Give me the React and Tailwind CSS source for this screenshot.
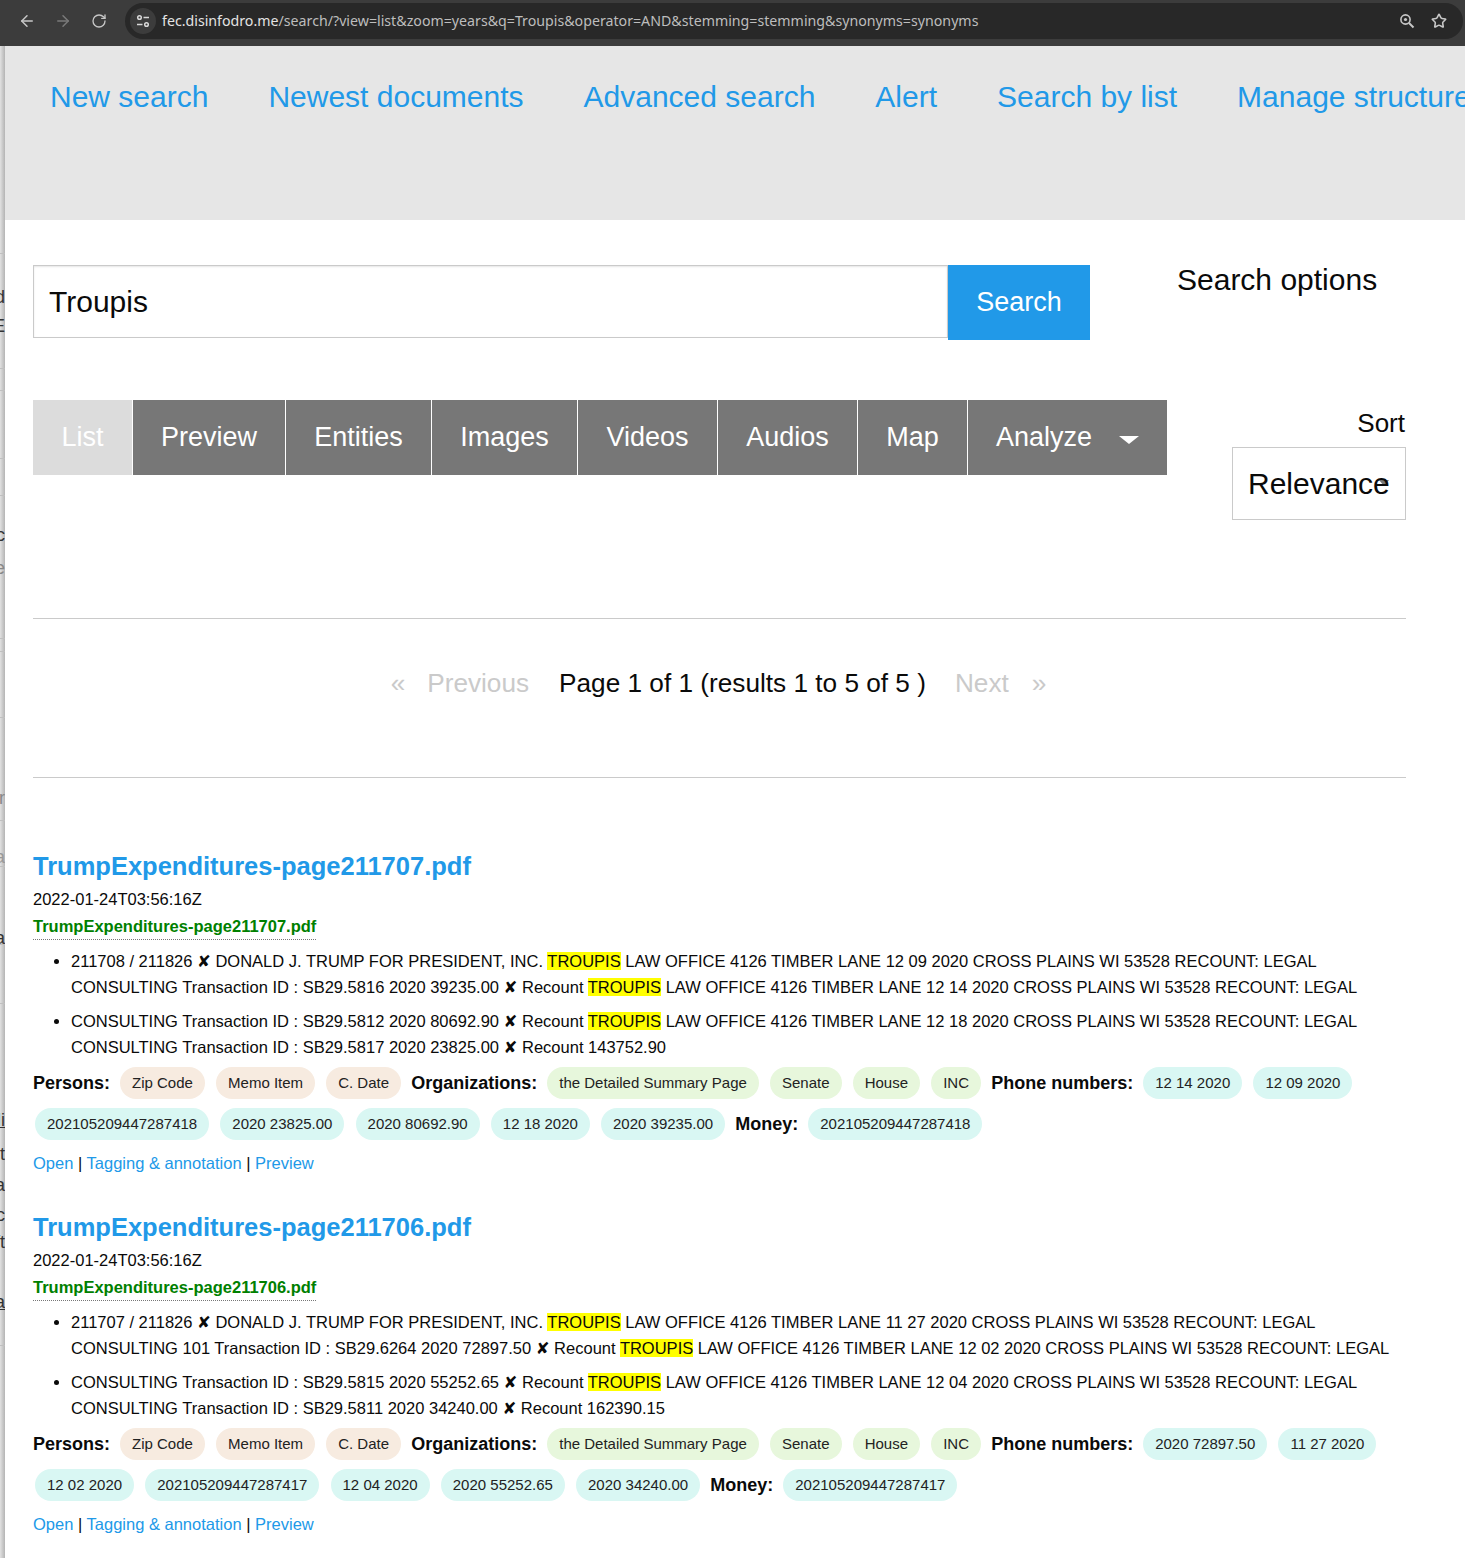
import React from "react";
import { ArrowLeft, ArrowRight, RotateCw, Star } from "lucide-react";

const navLinks = ["New search", "Newest documents", "Advanced search", "Alert", "Search by list", "Manage structure"];
const tabs = [
  { name: "List", w: "w-[99px]", active: true },
  { name: "Preview", w: "w-[152px]" },
  { name: "Entities", w: "w-[145px]" },
  { name: "Images", w: "w-[145px]" },
  { name: "Videos", w: "w-[139px]" },
  { name: "Audios", w: "w-[139px]" },
  { name: "Map", w: "w-[109px]" },
];

// bits of the window behind, showing at the left edge
const behind = [
  { t: "d", top: 286, c: "text-[#333]" },
  { t: "E", top: 315, c: "text-[#333]" },
  { t: "c", top: 524, c: "text-[#333]" },
  { t: "e", top: 557, c: "text-[#888]" },
  { t: "r", top: 787, c: "text-[#888]" },
  { t: "a", top: 846, c: "text-[#999]" },
  { t: "a", top: 927, c: "text-[#333]" },
  { t: "li", top: 1109, c: "text-[#333] underline" },
  { t: "ot", top: 1143, c: "text-[#333]" },
  { t: "ia", top: 1174, c: "text-[#333]" },
  { t: "ic", top: 1204, c: "text-[#333]" },
  { t: "ft", top: 1231, c: "text-[#333]" },
  { t: "a", top: 1291, c: "text-[#333] underline" },
];
const behindLines = [253, 368, 458, 390, 495, 638, 651, 717, 820, 866, 944, 1003, 1190, 1345];

const results = [
  {
    file: "TrumpExpenditures-page211707.pdf",
    snippets: [
      [
        ["211708 / 211826 ✘ DONALD J. TRUMP FOR PRESIDENT, INC. ", " LAW OFFICE 4126 TIMBER LANE 12 09 2020 CROSS PLAINS WI 53528 RECOUNT: LEGAL"],
        ["CONSULTING Transaction ID : SB29.5816 2020 39235.00 ✘ Recount ", " LAW OFFICE 4126 TIMBER LANE 12 14 2020 CROSS PLAINS WI 53528 RECOUNT: LEGAL"],
      ],
      [
        ["CONSULTING Transaction ID : SB29.5812 2020 80692.90 ✘ Recount ", " LAW OFFICE 4126 TIMBER LANE 12 18 2020 CROSS PLAINS WI 53528 RECOUNT: LEGAL"],
        ["CONSULTING Transaction ID : SB29.5817 2020 23825.00 ✘ Recount 143752.90"],
      ],
    ],
    phones: ["12 14 2020", "12 09 2020", "202105209447287418", "2020 23825.00", "2020 80692.90", "12 18 2020", "2020 39235.00"],
    money: "202105209447287418",
  },
  {
    file: "TrumpExpenditures-page211706.pdf",
    snippets: [
      [
        ["211707 / 211826 ✘ DONALD J. TRUMP FOR PRESIDENT, INC. ", " LAW OFFICE 4126 TIMBER LANE 11 27 2020 CROSS PLAINS WI 53528 RECOUNT: LEGAL"],
        ["CONSULTING 101 Transaction ID : SB29.6264 2020 72897.50 ✘ Recount ", " LAW OFFICE 4126 TIMBER LANE 12 02 2020 CROSS PLAINS WI 53528 RECOUNT: LEGAL"],
      ],
      [
        ["CONSULTING Transaction ID : SB29.5815 2020 55252.65 ✘ Recount ", " LAW OFFICE 4126 TIMBER LANE 12 04 2020 CROSS PLAINS WI 53528 RECOUNT: LEGAL"],
        ["CONSULTING Transaction ID : SB29.5811 2020 34240.00 ✘ Recount 162390.15"],
      ],
    ],
    phones: ["2020 72897.50", "11 27 2020", "12 02 2020", "202105209447287417", "12 04 2020", "2020 55252.65", "2020 34240.00"],
    money: "202105209447287417",
  },
];

const Chip = ({ color, children }) => (
  <span className={`ml-[2px] mr-[9.15px] flex h-[32px] items-center rounded-full px-[12px] text-[15px] text-[#222] ${color}`}>
    {children}
  </span>
);

const Label = ({ first, children }) => (
  <span className={`mr-[8px] text-[18px] font-bold text-[#0a0a0a] ${first ? "" : "ml-[1px]"}`}>{children}</span>
);

const Line = ({ parts }) => (
  <div className="whitespace-nowrap">
    {parts[0]}
    {parts.length > 1 && <mark className="bg-[#ffff00] text-[#0a0a0a]">TROUPIS</mark>}
    {parts[1]}
  </div>
);

const Result = ({ r }) => (
  <div className="h-[361px]">
    <a className="block h-[38px] text-[25.5px] font-bold leading-[38px] text-[#2199e8]">{r.file}</a>
    <div className="mt-[2px] text-[16.5px] leading-[24px] text-[#0a0a0a]">2022-01-24T03:56:16Z</div>
    <div className="mt-[3px]">
      <a className="inline-block border-b border-dotted border-[#777] text-[16.5px] font-bold leading-[25px] text-[#008000]">{r.file}</a>
    </div>
    <ul className="mb-[7px] mt-[8px] list-disc pl-[38px] text-[16.5px] leading-[26px] text-[#0a0a0a]">
      {r.snippets.map((item, i) => (
        <li key={i} className="mt-[8px] first:mt-0">
          {item.map((parts, j) => (
            <Line key={j} parts={parts} />
          ))}
        </li>
      ))}
    </ul>
    <div className="flex flex-wrap items-center gap-y-[9px]">
      <Label first>Persons:</Label>
      {["Zip Code", "Memo Item", "C. Date"].map((c) => (
        <Chip key={c} color="bg-[#f7ebe0]">{c}</Chip>
      ))}
      <Label>Organizations:</Label>
      {["the Detailed Summary Page", "Senate", "House", "INC"].map((c) => (
        <Chip key={c} color="bg-[#e7f7dc]">{c}</Chip>
      ))}
      <Label>Phone numbers:</Label>
      {r.phones.map((c) => (
        <Chip key={c} color="bg-[#d9f7f3]">{c}</Chip>
      ))}
      <Label>Money:</Label>
      <Chip color="bg-[#d9f7f3]">{r.money}</Chip>
    </div>
    <div className="mt-[10px] text-[16.5px] leading-[26px] text-[#0a0a0a]">
      <a className="text-[#2199e8]">Open</a> | <a className="text-[#2199e8]">Tagging &amp; annotation</a> |{" "}
      <a className="text-[#2199e8]">Preview</a>
    </div>
  </div>
);

export default function App() {
  return (
    <div className="relative h-[1558px] w-[1465px] overflow-hidden bg-white font-['Liberation_Sans','DejaVu_Sans',sans-serif]">
      {/* browser toolbar */}
      <div className="flex h-[46px] items-center bg-[#3c3c3c] pb-[4px] pl-[18px] pr-[2px] font-['Noto_Sans',sans-serif]">
        <ArrowLeft size={18} className="text-[#c7c7c7]" />
        <ArrowRight size={18} className="ml-[18px] text-[#7a7a7a]" />
        <RotateCw size={16} className="ml-[19px] text-[#c7c7c7]" />
        <div className="ml-[18px] flex h-[36px] flex-1 items-center rounded-full bg-[#282828] pl-[5px] pr-[16px]">
          <div className="flex h-[26px] w-[26px] items-center justify-center rounded-full bg-[#3c3c3c]">
            <svg width="16" height="16" viewBox="0 0 16 16" fill="none" stroke="#d8d8d8" strokeWidth="1.5">
              <circle cx="4.5" cy="4.5" r="1.8" />
              <path d="M8.5 4.5H14" />
              <path d="M2 11.5H7.5" />
              <circle cx="11.5" cy="11.5" r="1.8" />
            </svg>
          </div>
          <div className="ml-[6px] flex-1 whitespace-nowrap text-[14.2px] text-[#bdbdbd]">
            <span className="text-[#e3e3e3]">fec.disinfodro.me</span>/search/?view=list&amp;zoom=years&amp;q=Troupis&amp;operator=AND&amp;stemming=stemming&amp;synonyms=synonyms
          </div>
          <svg width="16" height="16" viewBox="0 0 16 16" fill="none" stroke="#c7c7c7" strokeWidth="1.6">
            <circle cx="6.5" cy="6.5" r="4.6" />
            <circle cx="6.5" cy="6.5" r="1.6" fill="#c7c7c7" stroke="none" />
            <path d="M10 10L14.5 14.5" strokeWidth="2" />
          </svg>
          <Star size={16} strokeWidth={2.4} className="ml-[16px] text-[#c7c7c7]" />
        </div>
      </div>

      <div className="flex">
        {/* window behind, left edge */}
        <div className="h-[1512px] w-[5px] shrink-0 bg-[#d8d8d8]" />

        <div className="min-w-0 flex-1">
          {/* top menu */}
          <nav className="flex h-[174px] gap-[60px] overflow-hidden whitespace-nowrap bg-[#e6e6e6] pl-[45px] pt-[32px] text-[30px] leading-[38px] text-[#2199e8]">
            {navLinks.map((l) => (
              <a key={l}>{l}</a>
            ))}
          </nav>

          <div className="pl-[28px] pr-[59px]">
            {/* search row */}
            <div className="flex items-start pt-[45px]">
              <div className="flex h-[73px] w-[915px] items-center border border-[#cacaca] pl-[15px] text-[30px] text-[#0a0a0a] shadow-[inset_0_1px_2px_rgba(10,10,10,0.1)]">
                Troupis
              </div>
              <button className="flex h-[75px] w-[142px] items-center justify-center bg-[#2199e8] text-[27px] text-white">Search</button>
              <div className="ml-[87px] mt-[-3px] text-[30px] leading-[36px] text-[#0a0a0a]">Search options</div>
            </div>

            {/* tabs and sort */}
            <div className="flex items-start justify-between pt-[60px]">
              <div className="flex gap-[1px] text-[27px] text-white">
                {tabs.map((t) => (
                  <div key={t.name} className={`flex h-[75px] items-center justify-center ${t.w} ${t.active ? "bg-[#dcdcdc]" : "bg-[#777777]"}`}>
                    {t.name}
                  </div>
                ))}
                <div className="flex h-[75px] w-[199px] items-center bg-[#777777] pl-[28px]">
                  Analyze
                  <span className="ml-[27px] mt-[4px] h-0 w-0 border-x-[10px] border-t-[8px] border-x-transparent border-t-white" />
                </div>
              </div>
              <div className="flex w-[174px] flex-col items-end">
                <div className="h-[47px] pr-[1px] pt-[6px] text-[26px] leading-[34px] text-[#0a0a0a]">Sort</div>
                <div className="relative flex h-[73px] w-[174px] items-center border border-[#cacaca] pl-[15px] text-[30px] text-[#0a0a0a]">
                  <span className="absolute right-[16px] top-[32px] h-0 w-0 border-x-[5px] border-t-[6px] border-x-transparent border-t-[#777]" />
                  <span className="relative">Relevance</span>
                </div>
              </div>
            </div>

            {/* pagination */}
            <div className="mt-[98px] flex h-[160px] items-center justify-center border-y border-[#cacaca] pb-[28px] pr-[2px] text-[26.2px] text-[#0a0a0a]">
              <span className="text-[#cacaca]">«</span>
              <span className="ml-[22px] text-[#cacaca]">Previous</span>
              <span className="ml-[30px]">Page 1 of 1 (results 1 to 5 of 5 )</span>
              <span className="ml-[29px] text-[#cacaca]">Next</span>
              <span className="ml-[23px] text-[#cacaca]">»</span>
            </div>

            {/* results */}
            <div className="pt-[69px]">
              {results.map((r) => (
                <Result key={r.file} r={r} />
              ))}
            </div>
          </div>
        </div>
      </div>

      {/* window behind: clipped text and rules at the left edge */}
      <div className="absolute left-0 top-[46px] h-[1512px] w-[5px] overflow-hidden bg-gradient-to-r from-[#e2e2e2] to-[#b4b4b4]">
        {behindLines.map((y) => (
          <div key={y} className="absolute left-0 h-[1px] w-[5px] bg-[#c0c0c0]" style={{ top: y - 46 }} />
        ))}
        {behind.map((b) => (
          <div key={b.top} className={`absolute right-0 text-[18px] leading-[22px] ${b.c}`} style={{ top: b.top - 46 }}>
            {b.t}
          </div>
        ))}
      </div>
    </div>
  );
}
